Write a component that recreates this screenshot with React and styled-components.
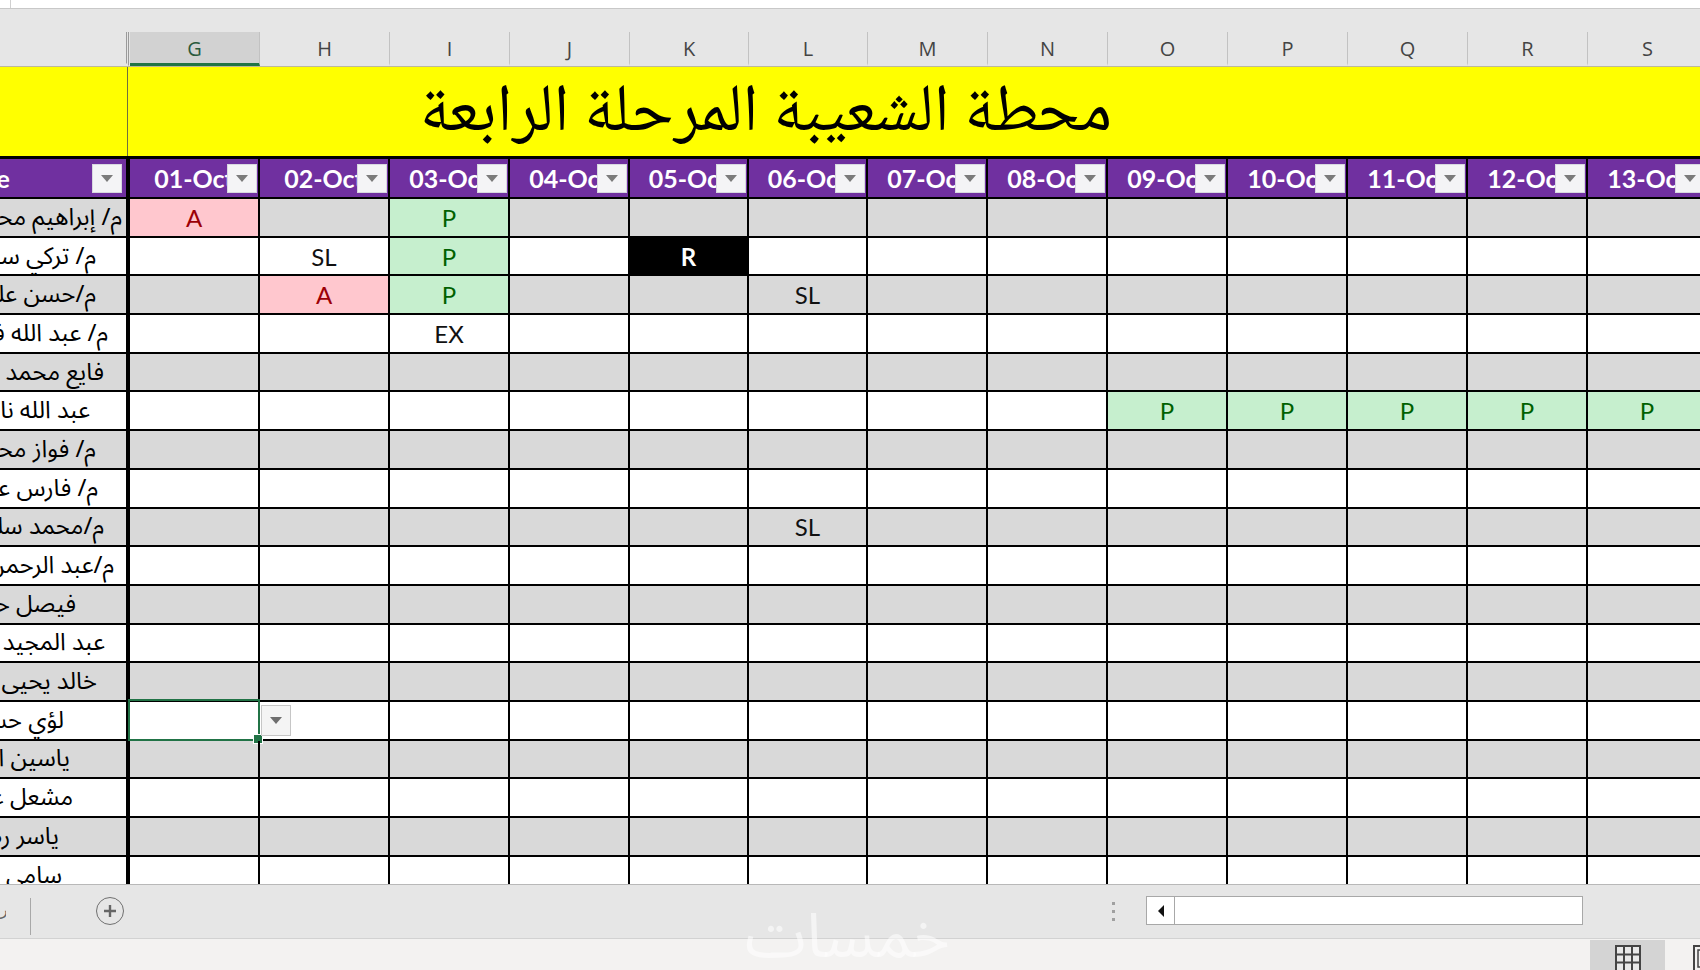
import React from 'react';
import styled, { createGlobalStyle } from 'styled-components';

const GlobalStyle = createGlobalStyle`
  html, body { margin: 0; padding: 0; overflow: hidden; background: #e6e6e6; }
  #root { width: 1700px; height: 970px; }
  * { box-sizing: border-box; }
`;

const LATIN = `"Lato", "Open Sans", "Liberation Sans", sans-serif`;
const UI = `"Open Sans", "Noto Sans", "Liberation Sans", sans-serif`;
const ARABIC = `"Noto Sans Arabic", "Noto Naskh Arabic", "DejaVu Sans", sans-serif`;
const ARABIC_TITLE = `"Noto Naskh Arabic", "Noto Sans Arabic", "DejaVu Sans", serif`;

const COLS = [
  { letter: 'G', w: 130, date: '01-Oct' },
  { letter: 'H', w: 130, date: '02-Oct' },
  { letter: 'I', w: 120, date: '03-Oct' },
  { letter: 'J', w: 120, date: '04-Oct' },
  { letter: 'K', w: 119, date: '05-Oct' },
  { letter: 'L', w: 119, date: '06-Oct' },
  { letter: 'M', w: 120, date: '07-Oct' },
  { letter: 'N', w: 120, date: '08-Oct' },
  { letter: 'O', w: 120, date: '09-Oct' },
  { letter: 'P', w: 120, date: '10-Oct' },
  { letter: 'Q', w: 120, date: '11-Oct' },
  { letter: 'R', w: 120, date: '12-Oct' },
  { letter: 'S', w: 120, date: '13-Oct' },
];

const NAME_W = 302;

/* indent: distance of the (right-aligned) name from the thick column border */
const PEOPLE = [
  { name: 'م/ إبراهيم محمد الشهري', indent: 4 },
  { name: 'م/ تركي سعد الغامدي', indent: 30 },
  { name: 'م/حسن علي القحطاني', indent: 30 },
  { name: 'م/ عبد الله فهد الحربي', indent: 18 },
  { name: 'فايع محمد عسيري اليامي', indent: 22 },
  { name: 'عبد الله ناصر الدوسري', indent: 36 },
  { name: 'م/ فواز محمد العنزي', indent: 30 },
  { name: 'م/ فارس عبد العزيز المالكي', indent: 28 },
  { name: 'م/محمد سليمان عبد الرحمن', indent: 22 },
  { name: 'م/عبد الرحمن خالد الزهراني', indent: 12 },
  { name: 'فيصل حمد المطيري', indent: 50 },
  { name: 'عبد المجيد صالح القرني', indent: 21 },
  { name: 'خالد يحيى أحمد الشهري', indent: 29 },
  { name: 'لؤي حسن الأحمد', indent: 62 },
  { name: 'ياسين العمري', indent: 56 },
  { name: 'مشعل عبد الله', indent: 53 },
  { name: 'ياسر رضا علي', indent: 67 },
  { name: 'سامي ابراهيم', indent: 64 },
];

const MARKS = {
  '0-0': { t: 'A', k: 'bad' },
  '0-2': { t: 'P', k: 'good' },
  '1-1': { t: 'SL' },
  '1-2': { t: 'P', k: 'good' },
  '1-4': { t: 'R', k: 'dark' },
  '2-1': { t: 'A', k: 'bad' },
  '2-2': { t: 'P', k: 'good' },
  '2-5': { t: 'SL' },
  '3-2': { t: 'EX' },
  '5-8': { t: 'P', k: 'good' },
  '5-9': { t: 'P', k: 'good' },
  '5-10': { t: 'P', k: 'good' },
  '5-11': { t: 'P', k: 'good' },
  '5-12': { t: 'P', k: 'good' },
  '8-5': { t: 'SL' },
};

const Page = styled.div`
  position: relative;
  width: 1700px;
  height: 970px;
  display: flex;
  flex-direction: column;
  overflow: hidden;
  background: #e6e6e6;
`;

const FormulaStrip = styled.div`
  height: 9px;
  flex: none;
  background: #ffffff;
  border-bottom: 1px solid #c8c8c8;
  display: flex;
  padding-left: 10px;
`;

const FormulaTick = styled.div`
  width: 1px;
  height: 8px;
  background: #d0d0d0;
`;

const Viewport = styled.div`
  flex: 1;
  overflow: hidden;
  display: flex;
  flex-direction: column;
`;

const Sheet = styled.div`
  margin-left: -172px;
  display: flex;
  flex-direction: column;
`;

const TopGap = styled.div`
  height: 23px;
  background: #e6e6e6;
`;

const Row = styled.div`
  display: flex;
  flex: none;
`;

const HeaderRow = styled(Row)`
  height: 35px;
  border-bottom: 1px solid #bdb89a;
`;

const ColHead = styled.div`
  flex: none;
  width: ${(p) => p.$w}px;
  height: 100%;
  display: flex;
  align-items: center;
  justify-content: center;
  font-family: ${UI};
  font-size: 20px;
  color: ${(p) => (p.$sel ? '#2b5a3c' : '#444444')};
  background: ${(p) => (p.$sel ? '#d2d2d2' : '#e6e6e6')};
  border-right: 1px solid #c2c2c2;
  border-bottom: 3px solid ${(p) => (p.$sel ? '#217346' : 'transparent')};
  padding-top: 2px;
`;

const CornerHead = styled(ColHead)`
  border-right: 3px double #9a9a9a;
  margin-right: 1px;
  width: ${NAME_W - 1}px;
`;

const TitleRow = styled(Row)`
  height: 92px;
  background: #ffff00;
  border-bottom: 3px solid #000;
`;

const TitleSide = styled.div`
  flex: none;
  width: ${NAME_W - 2}px;
  border-right: 1px solid #6f6f40;
  margin-right: 2px;
`;

const TitleCell = styled.div`
  flex: none;
  width: 1272px;
  display: flex;
  align-items: center;
  justify-content: center;
  direction: rtl;
  font-family: ${ARABIC_TITLE};
  font-size: 67px;
  line-height: 1;
  color: #000;
  padding-top: 8px;
`;

const PurpleRow = styled(Row)`
  height: 40px;
  background: #7030a0;
  border-bottom: 2px solid #000;
`;

const PurpleCell = styled.div`
  position: relative;
  flex: none;
  width: ${(p) => p.$w}px;
  height: 100%;
  border-right: ${(p) => (p.$thick ? 4 : 2)}px solid #000;
  display: flex;
  align-items: center;
  justify-content: center;
  font-family: ${LATIN};
  font-weight: 700;
  font-size: 25px;
  color: #ffffff;
  overflow: hidden;
  white-space: nowrap;
`;

const FilterButton = styled.div`
  position: absolute;
  right: ${(p) => p.$right ?? 1}px;
  top: 5px;
  width: 30px;
  height: 29px;
  background: #f4f4f6;
  border: 1px solid #d8d8e0;
  display: flex;
  align-items: center;
  justify-content: center;
  &::after {
    content: '';
    border-left: 6px solid transparent;
    border-right: 6px solid transparent;
    border-top: 7px solid #7b7b7b;
  }
`;

const DataRow = styled(Row)`
  height: 38.7px;
  border-bottom: 2px solid #000;
  background: ${(p) => (p.$gray ? '#d9d9d9' : '#ffffff')};
`;

const NameCell = styled.div`
  flex: none;
  width: ${NAME_W}px;
  height: 100%;
  border-right: 4px solid #000;
  display: flex;
  align-items: center;
  justify-content: flex-start;
  direction: rtl;
  padding-right: ${(p) => p.$indent}px;
  white-space: nowrap;
  overflow: hidden;
  font-family: ${ARABIC};
  font-size: 24px;
  color: #000;
`;

const KIND = {
  bad: { bg: '#ffc7ce', fg: '#9c0006', fw: 400 },
  good: { bg: '#c6efce', fg: '#006100', fw: 400 },
  dark: { bg: '#000000', fg: '#ffffff', fw: 700 },
};

const Cell = styled.div`
  position: relative;
  flex: none;
  width: ${(p) => p.$w}px;
  height: 100%;
  border-right: 2px solid #000;
  display: flex;
  align-items: center;
  justify-content: center;
  font-family: ${LATIN};
  font-size: 24px;
  background: ${(p) => (p.$kind ? KIND[p.$kind].bg : 'transparent')};
  color: ${(p) => (p.$kind ? KIND[p.$kind].fg : '#111')};
  font-weight: ${(p) => (p.$kind ? KIND[p.$kind].fw : 400)};
`;

const Selection = styled.div`
  position: absolute;
  left: -2px;
  top: -3px;
  right: -2px;
  bottom: -2px;
  border: 2px solid #217346;
  pointer-events: none;
  &::after {
    content: '';
    position: absolute;
    right: -5px;
    bottom: -5px;
    width: 8px;
    height: 8px;
    background: #217346;
    border: 1px solid #ffffff;
  }
`;

const ValidationButton = styled.div`
  position: absolute;
  left: calc(100% + 3px);
  top: 3px;
  width: 30px;
  height: 31px;
  background: #f4f4f4;
  border: 1px solid #c6c6c6;
  display: flex;
  align-items: center;
  justify-content: center;
  z-index: 2;
  &::after {
    content: '';
    border-left: 6px solid transparent;
    border-right: 6px solid transparent;
    border-top: 7px solid #6e6e6e;
  }
`;

const TabBar = styled.div`
  height: 54px;
  flex: none;
  background: #e6e6e6;
  border-top: 1px solid #b8b8b8;
  display: flex;
  align-items: center;
`;

const TabEdge = styled.div`
  width: 6px;
  overflow: hidden;
  font-family: ${UI};
  font-size: 16px;
  color: #666;
  white-space: nowrap;
  margin-top: -6px;
`;

const TabSeparator = styled.div`
  width: 1px;
  height: 37px;
  background: #a8a8a8;
  margin-left: 24px;
  margin-top: 10px;
`;

const AddSheet = styled.div`
  width: 28px;
  height: 28px;
  margin-left: 65px;
  margin-top: -2px;
  border: 1.5px solid #707070;
  border-radius: 50%;
  display: flex;
  align-items: center;
  justify-content: center;
  color: #666;
`;

const Spacer = styled.div`
  flex: 1;
`;

const Dots = styled.div`
  width: 3px;
  display: flex;
  flex-direction: column;
  gap: 5px;
  margin-right: 31px;
  span {
    width: 3px;
    height: 3px;
    background: #a0a0a0;
  }
`;

const HScroll = styled.div`
  width: 437px;
  height: 29px;
  margin-right: 117px;
  margin-top: -2px;
  background: #ffffff;
  border: 1px solid #a8a8a8;
  display: flex;
`;

const ScrollArrow = styled.div`
  width: 28px;
  height: 100%;
  border-right: 1px solid #a8a8a8;
  display: flex;
  align-items: center;
  justify-content: center;
  &::after {
    content: '';
    border-top: 6px solid transparent;
    border-bottom: 6px solid transparent;
    border-right: 6px solid #111;
  }
`;

const StatusBar = styled.div`
  height: 32px;
  flex: none;
  background: #f3f2f1;
  border-top: 1px solid #d2d2d2;
  display: flex;
  justify-content: flex-end;
  overflow: hidden;
`;

const ViewButton = styled.div`
  flex: none;
  width: 75px;
  height: 100%;
  margin-top: 1px;
  background: ${(p) => (p.$active ? '#d4d4d4' : 'transparent')};
  display: flex;
  align-items: flex-start;
  justify-content: ${(p) => (p.$active ? 'center' : 'flex-start')};
  padding-top: 5px;
  padding-left: ${(p) => (p.$active ? 0 : 28)}px;
`;

const LastView = styled(ViewButton)`
  margin-right: -40px;
`;

const Watermark = styled.div`
  position: absolute;
  left: 745px;
  top: 872px;
  font-family: ${ARABIC};
  font-size: 62px;
  color: rgba(255, 255, 255, 0.55);
  direction: rtl;
  pointer-events: none;
`;

const GridIcon = () => (
  <svg width="26" height="27" viewBox="0 0 26 27">
    <rect x="1" y="1" width="24" height="25" fill="#e8e8e8" stroke="#444" strokeWidth="2" />
    <line x1="9" y1="1" x2="9" y2="26" stroke="#444" strokeWidth="2" />
    <line x1="17" y1="1" x2="17" y2="26" stroke="#444" strokeWidth="2" />
    <line x1="1" y1="9.5" x2="25" y2="9.5" stroke="#444" strokeWidth="2" />
    <line x1="1" y1="17.5" x2="25" y2="17.5" stroke="#444" strokeWidth="2" />
  </svg>
);

const PageIcon = () => (
  <svg width="26" height="27" viewBox="0 0 26 27">
    <rect x="1" y="1" width="22" height="25" fill="none" stroke="#444" strokeWidth="2" />
    <rect x="5" y="5" width="14" height="17" fill="none" stroke="#444" strokeWidth="1.5" />
  </svg>
);

export default function App() {
  return (
    <Page>
      <GlobalStyle />
      <FormulaStrip>
        <FormulaTick />
      </FormulaStrip>
      <Viewport>
        <Sheet>
          <TopGap />
          <HeaderRow>
            <CornerHead $w={NAME_W}>F</CornerHead>
            {COLS.map((c, i) => (
              <ColHead key={c.letter} $w={c.w} $sel={i === 0}>
                {c.letter}
              </ColHead>
            ))}
          </HeaderRow>
          <TitleRow>
            <TitleSide />
            <TitleCell>محطة الشعيبة المرحلة الرابعة</TitleCell>
          </TitleRow>
          <PurpleRow>
            <PurpleCell $w={NAME_W} $thick>
              Name
              <FilterButton $right={4} />
            </PurpleCell>
            {COLS.map((c) => (
              <PurpleCell key={c.date} $w={c.w}>
                {c.date}
                <FilterButton />
              </PurpleCell>
            ))}
          </PurpleRow>
          {PEOPLE.map((p, r) => (
            <DataRow key={r} $gray={r % 2 === 0}>
              <NameCell $indent={p.indent}>{p.name}</NameCell>
              {COLS.map((c, ci) => {
                const m = MARKS[`${r}-${ci}`];
                const selected = r === 13 && ci === 0;
                return (
                  <Cell key={c.letter} $w={c.w} $kind={m && m.k}>
                    {m ? m.t : ''}
                    {selected && (
                      <>
                        <Selection />
                        <ValidationButton />
                      </>
                    )}
                  </Cell>
                );
              })}
            </DataRow>
          ))}
        </Sheet>
      </Viewport>
      <TabBar>
        <TabEdge>ير</TabEdge>
        <TabSeparator />
        <AddSheet>
          <svg width="16" height="16" viewBox="0 0 16 16">
            <path d="M8 2v12M2 8h12" stroke="#666" strokeWidth="2.4" />
          </svg>
        </AddSheet>
        <Spacer />
        <Dots>
          <span />
          <span />
          <span />
        </Dots>
        <HScroll>
          <ScrollArrow />
        </HScroll>
      </TabBar>
      <StatusBar>
        <ViewButton $active>
          <GridIcon />
        </ViewButton>
        <LastView>
          <PageIcon />
        </LastView>
      </StatusBar>
      <Watermark>خمسات</Watermark>
    </Page>
  );
}
